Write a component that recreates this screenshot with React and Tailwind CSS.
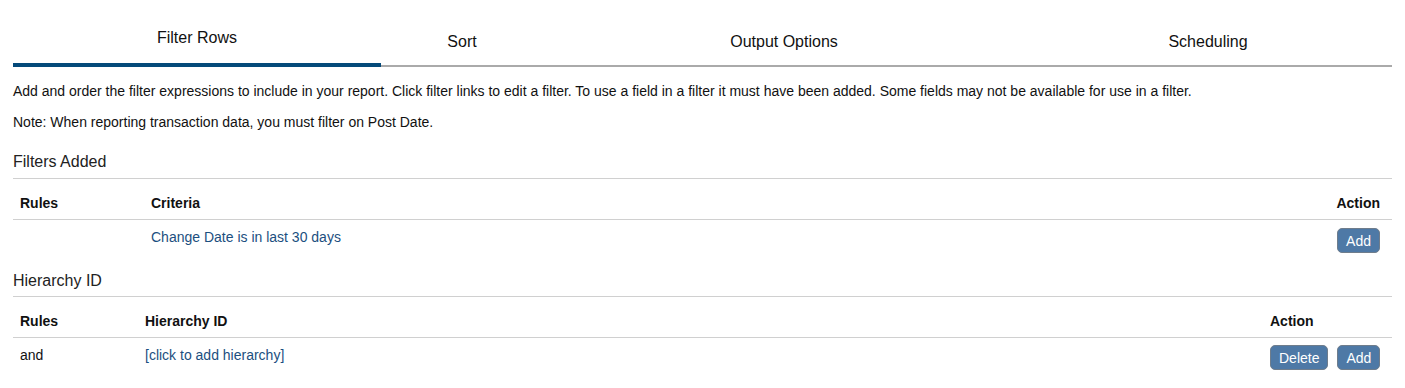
import React from "react";

const tabs = [
  { label: "Filter Rows", width: "w-[368px]", active: true },
  { label: "Sort", width: "w-[162px]" },
  { label: "Output Options", width: "w-[482px]" },
  { label: "Scheduling", width: "w-[366px]" },
];

function ActionButton({ children }) {
  return (
    <button
      type="button"
      className="h-[25px] rounded-[5px] border border-[#6f7d8c] bg-[#4e79a6] px-[8px] text-[14px] leading-none text-white"
    >
      {children}
    </button>
  );
}

export default function App() {
  return (
    <div className="min-h-screen bg-white px-[13px] font-['Liberation_Sans',Arial,sans-serif] text-[#111]">
      <nav className="flex border-b-2 border-[#aaa]">
        {tabs.map((tab) => (
          <div
            key={tab.label}
            className={
              tab.active
                ? "mb-[-2px] flex h-[67px] w-[368px] items-start justify-center border-b-4 border-[#054a7a] pt-[28px] text-[16px] leading-[20px]"
                : `flex h-[65px] ${tab.width} items-start justify-center pt-[32px] text-[16px] leading-[20px]`
            }
          >
            {tab.label}
          </div>
        ))}
      </nav>

      <p className="mt-[15px] text-[14px] leading-[18px]">
        Add and order the filter expressions to include in your report. Click filter links to edit a filter. To use a field in a filter it must have been added. Some fields may not be available for use in a filter.
      </p>
      <p className="mt-[13px] text-[14px] leading-[18px]">Note: When reporting transaction data, you must filter on Post Date.</p>

      <section className="mt-[21px]">
        <h3 className="border-b border-[#d0d0d0] pb-[6px] text-[16px] leading-[20px] text-[#222]">Filters Added</h3>
        <div className="flex border-b border-[#d0d0d0] pb-[8px] pt-[16px] text-[14px] font-bold leading-[16px]">
          <div className="w-[131px] pl-[7px]">Rules</div>
          <div className="flex-1 pl-[7px]">Criteria</div>
          <div className="pr-[12px]">Action</div>
        </div>
        <div className="flex items-start pb-[8px] pt-[8px] text-[14px] leading-[18px]">
          <div className="w-[131px] pl-[7px]"></div>
          <div className="flex-1 pl-[7px]">
            <a className="cursor-pointer text-[#1c4f80]">Change Date is in last 30 days</a>
          </div>
          <div className="pr-[12px]">
            <ActionButton>Add</ActionButton>
          </div>
        </div>
      </section>

      <section className="mt-[10px]">
        <h3 className="border-b border-[#d0d0d0] pb-[5px] text-[16px] leading-[20px] text-[#222]">Hierarchy ID</h3>
        <div className="flex border-b border-[#d0d0d0] pb-[8px] pt-[16px] text-[14px] font-bold leading-[16px]">
          <div className="w-[125px] pl-[7px]">Rules</div>
          <div className="flex-1 pl-[7px]">Hierarchy ID</div>
          <div className="w-[129px] pl-[7px]">Action</div>
        </div>
        <div className="flex items-start pb-[8px] pt-[7px] text-[14px] leading-[18px]">
          <div className="w-[125px] pl-[7px] pt-[1px]">and</div>
          <div className="flex-1 pl-[7px] pt-[1px]">
            <a className="cursor-pointer text-[#1c4f80]">[click to add hierarchy]</a>
          </div>
          <div className="flex w-[129px] gap-[9px] pl-[7px]">
            <ActionButton>Delete</ActionButton>
            <ActionButton>Add</ActionButton>
          </div>
        </div>
      </section>
    </div>
  );
}
